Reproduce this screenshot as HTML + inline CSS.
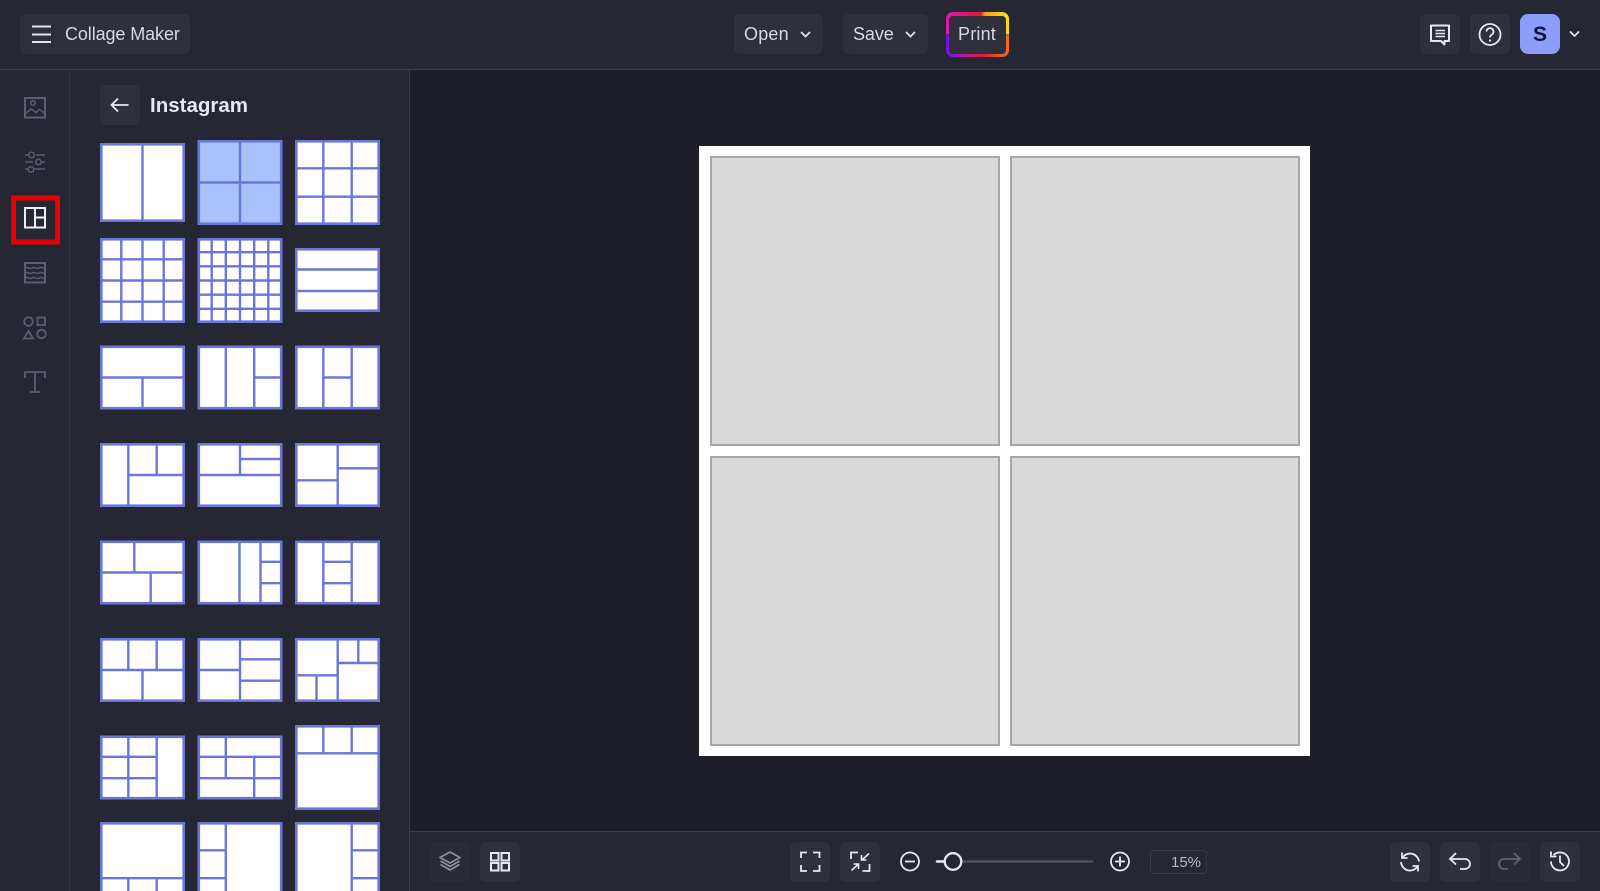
<!DOCTYPE html>
<html lang="en">
<head>
<meta charset="utf-8">
<title>Collage Maker</title>
<style>
html,body{margin:0;padding:0;width:1600px;height:891px;overflow:hidden;background:#1d1e28;font-family:"Liberation Sans",sans-serif;color:#e4e5ea}
.a{position:absolute}
.btn{position:absolute;background:#2e303c;border-radius:6px}
.t{position:absolute;white-space:nowrap;line-height:24px}
.c{position:absolute;width:290px;height:290px;background:#d9d9d9;border:2px solid #a6a6a6;box-sizing:border-box}
svg.o{position:absolute;left:0;top:0}
</style>
</head>
<body>
<div class="a" style="left:0;top:0;width:1600px;height:69px;background:#252732"></div>
<div class="a" style="left:0;top:69px;width:1600px;height:1px;background:#3a3c47"></div>
<div class="a" style="left:0;top:70px;width:69px;height:821px;background:#252732"></div>
<div class="a" style="left:69px;top:70px;width:1px;height:821px;background:#343642"></div>
<div class="a" style="left:70px;top:70px;width:339px;height:821px;background:#252732"></div>
<div class="a" style="left:409px;top:70px;width:1px;height:821px;background:#3a3c47"></div>
<div class="a" style="left:410px;top:831px;width:1190px;height:60px;background:#252732"></div>
<div class="a" style="left:410px;top:831px;width:1190px;height:1px;background:#3a3c47"></div>

<!-- header buttons -->
<div class="btn" style="left:20px;top:14px;width:170px;height:40px"></div>
<div class="btn" style="left:734px;top:14px;width:89px;height:40px"></div>
<div class="btn" style="left:843px;top:14px;width:85px;height:40px"></div>
<div class="a" style="left:945.500px;top:12px;width:63.500px;height:45px;border-radius:7px;background:linear-gradient(90deg,#d61bb0 0%,#e3163e 55%,#f2a01e 62%,#fbe01c 100%) top/100% 50% no-repeat,linear-gradient(90deg,#7010e8 0%,#c016a0 30%,#e3163e 55%,#f0701c 100%) bottom/100% 50% no-repeat"></div>
<div class="a" style="left:949px;top:15.500px;width:57px;height:38px;border-radius:4px;background:#2e303c"></div>
<div class="btn" style="left:1420px;top:14px;width:40px;height:40px"></div>
<div class="btn" style="left:1470px;top:14px;width:40px;height:40px"></div>
<div class="btn" style="left:1520px;top:14px;width:40px;height:40px;background:#8c9dfc;border-radius:8px"></div>
<div class="btn" style="left:100px;top:85px;width:40px;height:40px"></div>

<!-- bottom buttons -->
<div class="btn" style="left:430px;top:842px;width:40px;height:40px;background:#292b36"></div>
<div class="btn" style="left:480px;top:842px;width:40px;height:40px"></div>
<div class="btn" style="left:790px;top:842px;width:40px;height:40px"></div>
<div class="btn" style="left:840px;top:842px;width:40px;height:40px"></div>
<div class="btn" style="left:1390px;top:842px;width:40px;height:40px"></div>
<div class="btn" style="left:1440px;top:842px;width:40px;height:40px"></div>
<div class="btn" style="left:1490px;top:842px;width:40px;height:40px;background:#292b36"></div>
<div class="btn" style="left:1540px;top:842px;width:40px;height:40px"></div>
<div class="a" style="left:1150px;top:850px;width:55px;height:22px;border:1px solid #383a46;border-radius:4px"></div>

<!-- canvas -->
<div class="a" style="left:699px;top:145.500px;width:611px;height:610.500px;background:#fff"></div>
<div class="c" style="left:710px;top:156px"></div>
<div class="c" style="left:1010px;top:156px"></div>
<div class="c" style="left:710px;top:456px"></div>
<div class="c" style="left:1010px;top:456px"></div>

<!-- text -->
<div class="t" style="left:65px;top:22px;font-size:18px;letter-spacing:-.1px;color:#d8d9e0">Collage Maker</div>
<div class="t" style="left:744px;top:22px;font-size:18px;letter-spacing:.2px;color:#d8d9e0">Open</div>
<div class="t" style="left:853px;top:22px;font-size:18px;letter-spacing:-.1px;color:#d8d9e0">Save</div>
<div class="t" style="left:958px;top:22px;font-size:18px;letter-spacing:.2px;color:#d8d9e0">Print</div>
<div class="t" style="left:150px;top:94px;font-size:20.500px;font-weight:bold;color:#e8e9ee">Instagram</div>
<div class="t" style="left:1533px;top:23px;font-size:21px;font-weight:bold;color:#12153a">S</div>
<div class="t" style="left:1171px;top:851px;font-size:15px;color:#b9bac4">15%</div>

<svg class="o" width="1600" height="891" viewBox="0 0 1600 891" fill="none">
<!-- hamburger -->
<path d="M32 26.500h19M32 34.500h19M32 42h19" stroke="#e4e5ea" stroke-width="2"/>
<!-- chevrons -->
<path d="M801 32l4.500 4.500 4.500-4.500M906 32l4.500 4.500 4.500-4.500M1570 31.500l4.500 4.500 4.500-4.500" stroke="#e4e5ea" stroke-width="1.700"/>
<!-- comment -->
<path d="M1431 25.500h18v15.500h-4.500v3.500l-3.500-3.500h-10z" stroke="#e8e9ee" stroke-width="2" stroke-linejoin="round"/>
<path d="M1435.500 30.500h9.500M1435.500 33.500h9.500M1435.500 36.500h9.500" stroke="#e8e9ee" stroke-width="1.500"/>
<!-- help -->
<circle cx="1490" cy="34.500" r="10.500" stroke="#e8e9ee" stroke-width="1.800"/>
<path d="M1486.500 31.500a3.500 3.500 0 1 1 5.500 3c-1.300 .8-2 1.500-2 3" stroke="#e8e9ee" stroke-width="1.800"/>
<circle cx="1490" cy="40.500" r="1.100" fill="#e8e9ee"/>
<!-- back arrow -->
<path d="M128.500 105h-17M118 98.500l-6.500 6.500 6.500 6.500" stroke="#e8e9ee" stroke-width="1.800"/>

<!-- sidebar icons -->
<g stroke="#5c5e72" stroke-width="2">
<rect x="25" y="98" width="20" height="19.500"/>
<circle cx="33" cy="103" r="2.300" stroke-width="1.500"/>
<path d="M25 114l6-5 5 3.500 3.500-3 5.500 4" stroke-width="1.500"/>
<path d="M25 155h4M36 155h9M25 162h8M42 162h3M25 169h3M35 169h10" stroke-width="1.500"/>
<circle cx="31.500" cy="155" r="2.800" stroke-width="1.500"/>
<circle cx="38.500" cy="162" r="2.800" stroke-width="1.500"/>
<circle cx="31" cy="169.500" r="2.800" stroke-width="1.500"/>
<rect x="25" y="263" width="20" height="19.500"/>
<path d="M25 268c3-2 5 2 7 0s5 2 7 0 4 1 6 0M25 273c3-2 5 2 7 0s5 2 7 0 4 1 6 0M25 278c3-2 5 2 7 0s5 2 7 0 4 1 6 0" stroke-width="1.400"/>
<circle cx="28.500" cy="321.500" r="4.300" stroke-width="1.800"/>
<rect x="37.500" y="317.500" width="7.500" height="7.500" stroke-width="1.800"/>
<path d="M28.500 331l4.500 7.500h-9z" stroke-width="1.800"/>
<circle cx="41.500" cy="334" r="4.300" stroke-width="1.800"/>
<path d="M25 378v-6h20v6M35 372v20M30 392h10" stroke-width="1.800"/>
</g>
<rect x="13.500" y="198" width="44" height="44" stroke="#e60000" stroke-width="5"/>
<path d="M25 208h20v19.500h-20zM35 208v19.500M35 217.500h10" stroke="#f0f0f4" stroke-width="2"/>

<!-- bottom left icons -->
<path d="M450 852l10 5.500-10 5.500-10-5.500z" stroke="#8e909e" stroke-width="1.700" stroke-linejoin="round"/>
<path d="M440.500 861l9.500 5.500 9.500-5.500M440.500 864.500l9.500 5.500 9.500-5.500" stroke="#8e909e" stroke-width="1.700" stroke-linejoin="round"/>
<path d="M491 853h7.500v7.500h-7.500zM501.500 853h7.500v7.500h-7.500zM491 863h7.500v7.500h-7.500zM501.500 863h7.500v7.500h-7.500z" stroke="#e8e9ee" stroke-width="2"/>
<!-- fullscreen -->
<path d="M801 858v-5.500h6M813 852.500h6.500v5.500M819.500 865v6h-6.500M807 871h-6v-6" stroke="#e8e9ee" stroke-width="1.800"/>
<!-- fit -->
<path d="M851 859v-6.500h7M869.500 864v7h-7" stroke="#e8e9ee" stroke-width="1.800"/>
<path d="M869 853.500l-7 6.500M861.500 855v5h5M851.500 870.500l7-6.500M858.500 869v-5h-5" stroke="#e8e9ee" stroke-width="1.600"/>
<!-- minus -->
<circle cx="910" cy="861.500" r="9" stroke="#e8e9ee" stroke-width="1.800"/>
<path d="M905 861.500h10" stroke="#e8e9ee" stroke-width="1.800"/>
<!-- slider -->
<path d="M937 861.500h155" stroke="#4f5162" stroke-width="2.500" stroke-linecap="round"/>
<path d="M937 861.500h16" stroke="#e8e9ee" stroke-width="2.500" stroke-linecap="round"/>
<circle cx="953" cy="861.500" r="8.300" fill="#252732" stroke="#e8e9ee" stroke-width="2.300"/>
<!-- plus -->
<circle cx="1120" cy="861.500" r="9" stroke="#e8e9ee" stroke-width="1.800"/>
<path d="M1115 861.500h10M1120 856.500v10" stroke="#e8e9ee" stroke-width="1.800"/>
<!-- refresh -->
<path d="M1403 857a9 9 0 0 1 16 4.500M1417.500 866.500a9 9 0 0 1-16.500-4.500M1402 852.500v5.500h5.500M1418 871.500v-5.500h-5.500" stroke="#e8e9ee" stroke-width="1.800"/>
<!-- undo -->
<path d="M1456 853l-6 6 6 5.500M1450 859h15a5 5 0 0 1 0 10h-5" stroke="#e8e9ee" stroke-width="1.800"/>
<!-- redo -->
<path d="M1514 853l6 6-6 5.500M1520 859h-16a5 5 0 0 0 0 10h4" stroke="#62636f" stroke-width="1.800"/>
<!-- history -->
<path d="M1553.600 855.100a9 9 0 1 1-2.600 6.400M1551 851.500v5h5.500M1560 855.500v6.500l4 4" stroke="#e8e9ee" stroke-width="1.800"/>

<!-- thumbnails -->
<defs>
<style>.b{fill:#fff;stroke:#6b76da;stroke-width:2.600}.l{stroke:#6b76da;stroke-width:2.400}</style>
</defs>
<!-- row 1 -->
<g transform="translate(100 143)"><rect class="b" x="1.300" y="1.300" width="82.400" height="76.400"/><path class="l" d="M42.500 0v79"/></g>
<g transform="translate(197.500 140)"><rect class="b" x="1.300" y="1.300" width="82.400" height="82.400" style="fill:#a9c1fd"/><path class="l" d="M42.500 0v85M0 42.500h85"/></g>
<g transform="translate(295 140)"><rect class="b" x="1.300" y="1.300" width="82.400" height="82.400"/><path class="l" d="M28.300 0v85M56.700 0v85M0 28.300h85M0 56.700h85"/></g>
<!-- row 2 -->
<g transform="translate(100 238)"><rect class="b" x="1.300" y="1.300" width="82.400" height="82.400"/><path class="l" d="M21.300 0v85M42.500 0v85M63.700 0v85M0 21.300h85M0 42.500h85M0 63.700h85"/></g>
<g transform="translate(197.500 238)"><rect class="b" x="1.300" y="1.300" width="82.400" height="82.400"/><path class="l" d="M14.200 0v85M28.300 0v85M42.500 0v85M56.700 0v85M70.800 0v85M0 14.200h85M0 28.300h85M0 42.500h85M0 56.700h85M0 70.800h85"/></g>
<g transform="translate(295 248)"><rect class="b" x="1.300" y="1.300" width="82.400" height="61.400"/><path class="l" d="M0 21.500h85M0 43h85"/></g>
<!-- row 3 -->
<g transform="translate(100 345.500)"><rect class="b" x="1.300" y="1.300" width="82.400" height="61.400"/><path class="l" d="M0 32h85M42.500 32v32"/></g>
<g transform="translate(197.500 345.500)"><rect class="b" x="1.300" y="1.300" width="82.400" height="61.400"/><path class="l" d="M28.300 0v64M56.700 0v64M56.700 32h28.300"/></g>
<g transform="translate(295 345.500)"><rect class="b" x="1.300" y="1.300" width="82.400" height="61.400"/><path class="l" d="M28.300 0v64M56.700 0v64M28.300 32h28.400"/></g>
<!-- row 4 -->
<g transform="translate(100 443)"><rect class="b" x="1.300" y="1.300" width="82.400" height="61.400"/><path class="l" d="M28.300 0v64M28.300 32h56.700M56.700 0v32"/></g>
<g transform="translate(197.500 443)"><rect class="b" x="1.300" y="1.300" width="82.400" height="61.400"/><path class="l" d="M0 32h85M42.500 0v32M42.500 16h42.500"/></g>
<g transform="translate(295 443)"><rect class="b" x="1.300" y="1.300" width="82.400" height="61.400"/><path class="l" d="M42.700 0v64M0 37.300h42.700M42.700 25.300h42.300"/></g>
<!-- row 5 -->
<g transform="translate(100 540.500)"><rect class="b" x="1.300" y="1.300" width="82.400" height="61.400"/><path class="l" d="M0 32h85M34.300 0v32M50.700 32v32"/></g>
<g transform="translate(197.500 540.500)"><rect class="b" x="1.300" y="1.300" width="82.400" height="61.400"/><path class="l" d="M42 0v64M63 0v64M63 21.300h22M63 42.700h22"/></g>
<g transform="translate(295 540.500)"><rect class="b" x="1.300" y="1.300" width="82.400" height="61.400"/><path class="l" d="M28.300 0v64M56.700 0v64M28.300 21.300h28.400M28.300 42.700h28.400"/></g>
<!-- row 6 -->
<g transform="translate(100 638)"><rect class="b" x="1.300" y="1.300" width="82.400" height="61.400"/><path class="l" d="M0 32h85M28.300 0v32M56.700 0v32M42.500 32v32"/></g>
<g transform="translate(197.500 638)"><rect class="b" x="1.300" y="1.300" width="82.400" height="61.400"/><path class="l" d="M42.500 0v64M0 32h42.500M42.500 21.300h42.500M42.500 42.700h42.500"/></g>
<g transform="translate(295 638)"><rect class="b" x="1.300" y="1.300" width="82.400" height="61.400"/><path class="l" d="M42.700 0v64M0 37.300h42.700M21.500 37.300v26.700M42.700 25h42.300M63.300 0v25"/></g>
<!-- row 7 -->
<g transform="translate(100 735.500)"><rect class="b" x="1.300" y="1.300" width="82.400" height="61.400"/><path class="l" d="M28.300 0v64M56.700 0v64M0 21.300h56.700M0 42.700h56.700"/></g>
<g transform="translate(197.500 735.500)"><rect class="b" x="1.300" y="1.300" width="82.400" height="61.400"/><path class="l" d="M0 21.300h85M0 42.700h85M28.300 0v42.700M56.700 21.300v42.700"/></g>
<g transform="translate(295 725)"><rect class="b" x="1.300" y="1.300" width="82.400" height="82.400"/><path class="l" d="M0 28.300h85M28.300 0v28.300M56.700 0v28.300"/></g>
<!-- row 8 -->
<g transform="translate(100 822)"><rect class="b" x="1.300" y="1.300" width="82.400" height="82.400"/><path class="l" d="M0 56.200h85M28.300 56.200v29M56.700 56.200v29"/></g>
<g transform="translate(197.500 822)"><rect class="b" x="1.300" y="1.300" width="82.400" height="82.400"/><path class="l" d="M28.300 0v85M0 28.300h28.300M0 56.200h28.300"/></g>
<g transform="translate(295 822)"><rect class="b" x="1.300" y="1.300" width="82.400" height="82.400"/><path class="l" d="M56.700 0v85M56.700 28.300h28.300M56.700 56.200h28.300"/></g>
</svg>
</body>
</html>
